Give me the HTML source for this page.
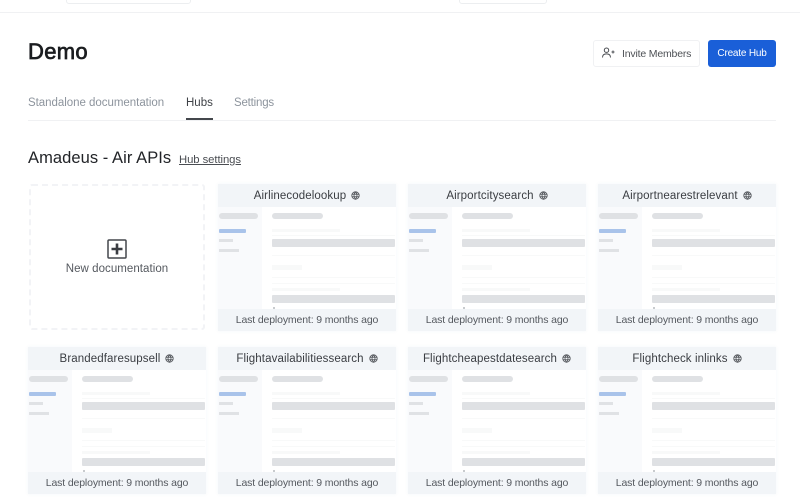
<!DOCTYPE html>
<html><head><meta charset="utf-8"><style>
*{box-sizing:border-box}
html,body{margin:0;padding:0;width:800px;height:500px;overflow:hidden;background:#fff;font-family:"Liberation Sans",sans-serif}
#w{position:absolute;left:0;top:0;width:800px;height:500px;filter:blur(.3px)}
.a{position:absolute;white-space:nowrap}
.card{position:absolute;width:178px;height:147px;background:#fff;overflow:hidden;box-shadow:0 0 3px rgba(215,225,235,.3)}
.p{position:absolute;left:0;top:0}
.h{position:absolute;left:0;top:0;width:178px;height:23px;background:#f2f5f8;text-align:center;font-size:11.5px;line-height:24px;color:#3a3d42;letter-spacing:.1px}
.h svg{vertical-align:-1px;margin-left:5px}
.f{position:absolute;left:0;top:125px;width:178px;height:22px;background:#f2f5f8;text-align:center;font-size:10.5px;line-height:23px;color:#55595f;letter-spacing:-.14px}
</style></head><body>
<svg width="0" height="0" style="position:absolute"><defs>
<symbol id="pv" viewBox="0 0 178 147">
<rect x="0" y="23" width="44" height="102" fill="#f9fafc"/>
<rect x="1" y="29" width="39" height="6" rx="3" fill="#dfe1e4"/>
<rect x="54" y="29" width="51" height="6" rx="3" fill="#dfe1e4"/>
<rect x="1" y="45" width="27" height="4" rx="1" fill="#a9c3ea"/>
<rect x="1" y="55" width="14" height="3" fill="#e0e2e5"/>
<rect x="1" y="65" width="20" height="3" fill="#e0e2e5"/>
<rect x="54" y="45" width="68" height="3" fill="#f8f9f9"/>
<rect x="54" y="51" width="123" height="1" fill="#f8f9f9"/>
<rect x="54" y="55" width="123" height="8" rx="1" fill="#dfe1e4"/>
<rect x="54" y="71" width="123" height="1" fill="#f8f9f9"/>
<rect x="54" y="81" width="30" height="5" fill="#f8f9f9"/>
<rect x="54" y="93" width="123" height="1" fill="#f8f9f9"/>
<rect x="54" y="99" width="123" height="1" fill="#f8f9f9"/>
<rect x="54" y="104" width="68" height="3" fill="#f8f9f9"/>
<rect x="54" y="111" width="123" height="8" rx="1" fill="#dfe1e4"/>
<rect x="55" y="123" width="2" height="2" fill="#c8cbce"/>
</symbol>
<symbol id="gl" viewBox="0 0 9 9">
<g fill="none" stroke="#4a4d52" stroke-width=".8"><circle cx="4.500" cy="4.500" r="3.700"/><path d="M.8 3.200h7.400M.8 5.800h7.400M4.500.8c-2 2.200-2 5.200 0 7.400c2-2.200 2-5.200 0-7.400"/></g>
</symbol>
</defs></svg>
<div id="w">
<div class="a" style="left:66px;top:-8px;width:125px;height:12px;border:1px solid #eceef0;border-radius:3px"></div>
<div class="a" style="left:459px;top:-8px;width:88px;height:12px;border:1px solid #eceef0;border-radius:3px"></div>
<div class="a" style="left:0;top:12px;width:800px;height:1px;background:#f0f1f3"></div>
<div class="a" style="left:28px;top:39px;font-size:22px;line-height:26px;color:#1b1d20;letter-spacing:.3px;-webkit-text-stroke:.7px #1b1d20">Demo</div>
<div class="a" style="left:593px;top:40px;width:107px;height:27px;border:1px solid #f0f1f3;border-radius:3px"></div>
<svg class="a" style="left:601px;top:47px" width="14" height="12" viewBox="0 0 14 12" fill="none" stroke="#4a4d52" stroke-width="1"><circle cx="5.500" cy="3.200" r="2.200"/><path d="M1.500 10.500c0-2.500 1.800-3.600 4-3.600s4 1.100 4 3.600"/><path d="M10.500 5h3M12 3.500v3"/></svg>
<div class="a" style="left:622px;top:47px;font-size:10.5px;line-height:14px;color:#4d5055;letter-spacing:-.18px">Invite Members</div>
<div class="a" style="left:708px;top:40px;width:68px;height:27px;background:#1a5fd8;border-radius:3px;color:#fff;font-size:10px;line-height:28px;text-align:center;letter-spacing:-.2px">Create Hub</div>
<div class="a" style="left:28px;top:96px;font-size:11.5px;line-height:14px;color:#8d949d;letter-spacing:-.03px">Standalone documentation</div>
<div class="a" style="left:186px;top:96px;font-size:11.5px;line-height:14px;color:#3f4247">Hubs</div>
<div class="a" style="left:234px;top:96px;font-size:11.5px;line-height:14px;color:#8d949d;letter-spacing:-.2px">Settings</div>
<div class="a" style="left:28px;top:120px;width:748px;height:1px;background:#f0f1f3"></div>
<div class="a" style="left:186px;top:118px;width:27px;height:2px;background:#44474c"></div>
<div class="a" style="left:28px;top:148px;font-size:16.5px;line-height:20px;color:#222428;letter-spacing:.06px">Amadeus - Air APIs</div>
<div class="a" style="left:179px;top:153px;font-size:11.3px;line-height:14px;color:#4a4d52;letter-spacing:-.07px;text-decoration:underline">Hub settings</div>
<div class="a" style="left:29px;top:184px;width:176px;height:146px;border:2px dashed #f2f3f6;border-radius:3px"></div>
<svg class="a" style="left:107px;top:239px" width="20" height="20" viewBox="0 0 20 20"><rect x="1" y="1" width="18" height="18" rx="1" fill="none" stroke="#44474c" stroke-width="1.500"/><path d="M10 4.500v11M4.500 10h11" stroke="#3a3d42" stroke-width="2.600"/></svg>
<div class="a" style="left:29px;top:262px;width:176px;text-align:center;font-size:11.5px;line-height:14px;color:#55595f;letter-spacing:.05px">New documentation</div>

<div class="card" style="left:218px;top:184px"><svg class="p" width="178" height="147"><use href="#pv"/></svg><div class="h">Airlinecodelookup<svg width="9" height="9"><use href="#gl"/></svg></div><div class="f">Last deployment: 9 months ago</div></div>
<div class="card" style="left:408px;top:184px"><svg class="p" width="178" height="147"><use href="#pv"/></svg><div class="h">Airportcitysearch<svg width="9" height="9"><use href="#gl"/></svg></div><div class="f">Last deployment: 9 months ago</div></div>
<div class="card" style="left:598px;top:184px"><svg class="p" width="178" height="147"><use href="#pv"/></svg><div class="h">Airportnearestrelevant<svg width="9" height="9"><use href="#gl"/></svg></div><div class="f">Last deployment: 9 months ago</div></div>
<div class="card" style="left:28px;top:347px"><svg class="p" width="178" height="147"><use href="#pv"/></svg><div class="h">Brandedfaresupsell<svg width="9" height="9"><use href="#gl"/></svg></div><div class="f">Last deployment: 9 months ago</div></div>
<div class="card" style="left:218px;top:347px"><svg class="p" width="178" height="147"><use href="#pv"/></svg><div class="h">Flightavailabilitiessearch<svg width="9" height="9"><use href="#gl"/></svg></div><div class="f">Last deployment: 9 months ago</div></div>
<div class="card" style="left:408px;top:347px"><svg class="p" width="178" height="147"><use href="#pv"/></svg><div class="h">Flightcheapestdatesearch<svg width="9" height="9"><use href="#gl"/></svg></div><div class="f">Last deployment: 9 months ago</div></div>
<div class="card" style="left:598px;top:347px"><svg class="p" width="178" height="147"><use href="#pv"/></svg><div class="h">Flightcheck inlinks<svg width="9" height="9"><use href="#gl"/></svg></div><div class="f">Last deployment: 9 months ago</div></div>
</div>
</body></html>
